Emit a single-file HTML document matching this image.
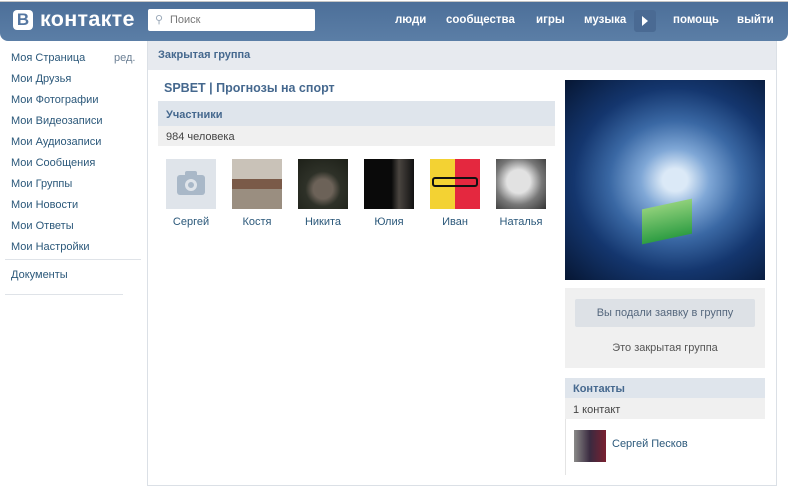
<!DOCTYPE html>
<html><head><meta charset="utf-8"><style>
*{margin:0;padding:0;box-sizing:border-box}
body{width:789px;height:487px;background:#fff;font-family:"Liberation Sans",Tahoma,sans-serif;font-size:11px;color:#000;position:relative;overflow:hidden}
.a{position:absolute}
#hd{left:0;top:1px;width:788px;height:40px;background:linear-gradient(#4c6f99,#5b7ea6);border-radius:0 0 8px 8px;border-top:1px solid #c5c5c5}
.logo{left:13px;top:10px;width:20px;height:20px;background:#fff;border-radius:4px;color:#5577a1;font-weight:bold;font-size:17px;text-align:center;line-height:20px}
.logot{left:40px;top:7px;color:#fff;font-weight:bold;font-size:21.5px;letter-spacing:0.3px}
.srch{left:148px;top:9px;width:167px;height:22px;background:#fff;border-radius:2px;color:#777;font-size:11px;line-height:22px;padding-left:22px}
.nav{top:14px;color:#fff;font-weight:bold;font-size:11.5px}
.ln{left:11px;color:#2b587a;font-size:11px;margin-top:1px}
.sep{height:1px;background:#dfe3e8}
.ph{width:50px;height:50px;top:159px}
.nm{top:216px;width:66px;text-align:center;color:#2b587a;font-size:11px}
</style></head><body>
<div id="hd" class="a"></div>
<div class="a logo">B</div>
<div class="a logot">контакте</div>
<div class="a srch"><span style="position:absolute;left:7px;top:0;color:#9aa8b8">&#9906;</span>Поиск</div>
<div class="a nav" style="left:395px">люди</div>
<div class="a nav" style="left:446px">сообщества</div>
<div class="a nav" style="left:536px">игры</div>
<div class="a nav" style="left:584px">музыка</div>
<div class="a" style="left:634px;top:10px;width:22px;height:22px;background:#4a6a93;border-radius:3px"></div>
<div class="a" style="left:642px;top:16px;width:0;height:0;border-left:6px solid #fff;border-top:5px solid transparent;border-bottom:5px solid transparent"></div>
<div class="a nav" style="left:673px">помощь</div>
<div class="a nav" style="left:737px">выйти</div>

<div class="a ln" style="top:51px">Моя Страница</div>
<div class="a" style="left:114px;top:52px;color:#6b7f94">ред.</div>
<div class="a ln" style="top:72px">Мои Друзья</div>
<div class="a ln" style="top:93px">Мои Фотографии</div>
<div class="a ln" style="top:114px">Мои Видеозаписи</div>
<div class="a ln" style="top:135px">Мои Аудиозаписи</div>
<div class="a ln" style="top:156px">Мои Сообщения</div>
<div class="a ln" style="top:177px">Мои Группы</div>
<div class="a ln" style="top:198px">Мои Новости</div>
<div class="a ln" style="top:219px">Мои Ответы</div>
<div class="a ln" style="top:240px">Мои Настройки</div>
<div class="a sep" style="left:5px;top:259px;width:136px"></div>
<div class="a ln" style="top:268px">Документы</div>
<div class="a sep" style="left:5px;top:294px;width:118px"></div>

<div class="a" style="left:147px;top:41px;width:630px;height:445px;border:1px solid #dbe0e6;border-top:none;background:#fff"></div>
<div class="a" style="left:148px;top:41px;width:628px;height:29px;background:#e7eaef"></div>
<div class="a" style="left:158px;top:49px;color:#45688e;font-weight:bold;font-size:11px">Закрытая группа</div>
<div class="a" style="left:164px;top:81px;color:#45688e;font-weight:bold;font-size:12.5px">SPBET | Прогнозы на спорт</div>
<div class="a" style="left:158px;top:101px;width:397px;height:25px;background:#dfe5ec"></div>
<div class="a" style="left:166px;top:109px;color:#45688e;font-weight:bold">Участники</div>
<div class="a" style="left:158px;top:126px;width:397px;height:20px;background:#f0f0f0"></div>
<div class="a" style="left:166px;top:131px;color:#444">984 человека</div>

<div class="a ph" style="left:166px;background:#dfe4ea"><div class="a" style="left:11px;top:16px;width:28px;height:20px;background:#a9b8c8;border-radius:3px"></div><div class="a" style="left:19px;top:12px;width:12px;height:6px;background:#a9b8c8;border-radius:2px"></div><div class="a" style="left:19px;top:20px;width:12px;height:12px;border-radius:50%;border:3px solid #dfe4ea;background:#a9b8c8"></div></div>
<div class="a ph" style="left:232px;background:linear-gradient(#c9c2b8 0 40%,#7a5a48 40% 60%,#9a8e80 60%)"></div>
<div class="a ph" style="left:298px;background:radial-gradient(circle at 50% 60%,#6c6258 0 25%,#2e3128 45%,#1d2018)"></div>
<div class="a ph" style="left:364px;background:linear-gradient(90deg,#0a0a0a 0 55%,#4a4540 70%,#111)"></div>
<div class="a ph" style="left:430px;background:linear-gradient(90deg,#f3d233 0 50%,#e4283f 50%)"><div class="a" style="left:2px;top:18px;width:46px;height:10px;border:2px solid #111;border-radius:3px"></div></div>
<div class="a ph" style="left:496px;background:radial-gradient(circle at 45% 45%,#e2e2e2 0 30%,#777 60%,#333)"></div>
<div class="a nm" style="left:158px">Сергей</div>
<div class="a nm" style="left:224px">Костя</div>
<div class="a nm" style="left:290px">Никита</div>
<div class="a nm" style="left:356px">Юлия</div>
<div class="a nm" style="left:422px">Иван</div>
<div class="a nm" style="left:488px">Наталья</div>

<div class="a" style="left:565px;top:80px;width:200px;height:200px;background:radial-gradient(ellipse at 55% 50%,#dbe9f7 0 8%,#7fa7d6 22%,#3a68a4 42%,#14366e 65%,#061633)"></div>
<div class="a" style="left:642px;top:204px;width:50px;height:35px;background:linear-gradient(#8fd07a,#2e9d43);transform:skewY(-12deg)"></div>
<div class="a" style="left:565px;top:288px;width:200px;height:80px;background:#f0f0f0"></div>
<div class="a" style="left:575px;top:299px;width:180px;height:28px;background:#dde1e6;border-radius:2px;text-align:center;line-height:28px;color:#55677d">Вы подали заявку в группу</div>
<div class="a" style="left:565px;top:342px;width:200px;text-align:center;color:#555">Это закрытая группа</div>
<div class="a" style="left:565px;top:378px;width:200px;height:20px;background:#dfe5ec"></div>
<div class="a" style="left:573px;top:383px;color:#45688e;font-weight:bold">Контакты</div>
<div class="a" style="left:565px;top:398px;width:200px;height:21px;background:#f0f0f0"></div>
<div class="a" style="left:573px;top:404px;color:#444">1 контакт</div>
<div class="a" style="left:574px;top:430px;width:32px;height:32px;background:linear-gradient(90deg,#8a8a88,#3a2a40 50%,#7a2030)"></div>
<div class="a" style="left:612px;top:438px;color:#2b587a">Сергей Песков</div>
<div class="a" style="left:565px;top:419px;width:1px;height:56px;background:#e4e4e4"></div>
</body></html>
